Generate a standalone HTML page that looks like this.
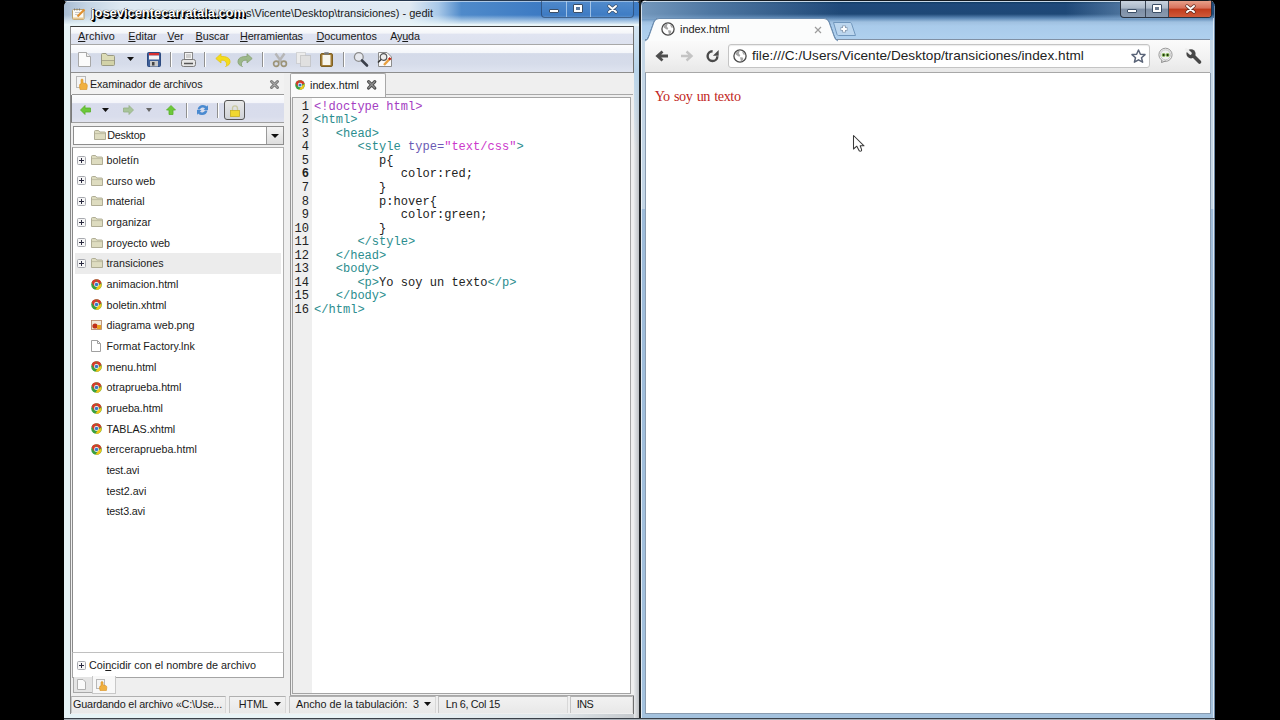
<!DOCTYPE html>
<html><head><meta charset="utf-8">
<style>
*{margin:0;padding:0;box-sizing:border-box}
html,body{width:1280px;height:720px;overflow:hidden;background:#000;font-family:"Liberation Sans",sans-serif;font-size:11px;color:#1e1e1e}
.a{position:absolute}
.t{position:absolute;white-space:pre;line-height:1}
.mono{font-family:"Liberation Mono",monospace}
u{text-decoration:underline;text-underline-offset:1px;text-decoration-thickness:1px}
svg{overflow:visible}
</style></head><body>

<div class="a" style="left:64px;top:718px;width:1151px;height:1px;background:#3a4048"></div>
<div class="a" style="left:64px;top:719px;width:1151px;height:1px;background:#a8b0b8"></div>
<div class="a" style="left:64px;top:0;width:576px;height:718px;border-radius:7px 7px 0 0;background:linear-gradient(90deg,#e6f3f6 0,#eaf3f6 50%,#dfe6ea 85%,#c4c8cc 100%);overflow:hidden"></div>
<div class="a" style="left:634px;top:18px;width:6px;height:700px;background:linear-gradient(90deg,#e8eaec,#b4b8bc)"></div>
<div class="a" style="left:634px;top:18px;width:6px;height:130px;background:linear-gradient(180deg,#dbeaf4,#b8d4ea 40%,rgba(208,221,230,0) 100%)"></div>
<div class="a" style="left:64px;top:0;width:576px;height:24px;border-radius:7px 7px 0 0;background:linear-gradient(90deg,#a8bcd2 0,#c4d4e4 4%,#dde8f1 10%,#e0eaf3 60%,#a8c8e8 65%,#4f8aca 69%,#3a78c2 85%,#3f7dc6 100%)"></div>
<div class="a" style="left:64px;top:15px;width:576px;height:11px;background:linear-gradient(180deg,rgba(236,246,250,0) 0,#e8f4f8 90%)"></div>
<div class="a" style="left:64px;top:0;width:576px;height:1px;background:#26384f;border-radius:7px 7px 0 0"></div>
<div class="a" style="left:65px;top:1px;width:574px;height:1px;background:rgba(255,255,255,.55)"></div>
<div class="t" style="left:246.00px;top:7.65px;font-size:11px;letter-spacing:-0.013px;color:#1a1a1a;">s\Vicente\Desktop\transiciones) - gedit</div>
<div class="t" style="left:200.00px;top:7.65px;font-size:11px;letter-spacing:0.000px;color:rgba(40,40,40,.35);">(C:\U</div>
<svg class="a" style="left:72px;top:8px" width="14" height="12" viewBox="0 0 14 12"><rect x="0.5" y="1.5" width="11.5" height="10" rx="1" fill="#fbfaf4" stroke="#b8a070"/><rect x="1" y="9.5" width="10.5" height="1.8" fill="#e8c890"/><path d="M3 4.5h5M3 6.5h4" stroke="#c8c8c8"/><path d="M5.5 8.5 L12.5 1.5" stroke="#e09030" stroke-width="2.2"/><path d="M2.5 0.5v2M5 0.5v2M7.5 0.5v2" stroke="#777" stroke-width="0.9"/></svg>
<div class="t" style="left:91.00px;top:6.45px;font-size:13px;letter-spacing:-0.057px;color:#fff;font-weight:bold;text-shadow:-0.6px -0.3px 0 rgba(0,0,0,.7),1px 1px 0 #000,1.8px 1.8px 0.6px #000,0 0 1px rgba(0,0,0,.6)">josevicentecarratala.com</div>
<div class="a" style="left:541px;top:1px;width:93px;height:17px;border:1px solid rgba(30,50,80,.55);border-top:none;border-radius:0 0 4px 4px;background:linear-gradient(180deg,rgba(120,170,220,.35),rgba(60,120,190,.2))"></div>
<div class="a" style="left:566px;top:1px;width:1px;height:16px;background:rgba(190,215,240,.75)"></div>
<div class="a" style="left:590px;top:1px;width:1px;height:16px;background:rgba(190,215,240,.75)"></div>
<div class="a" style="left:549px;top:9px;width:10px;height:4px;background:#fff;border:1px solid #3b4e66;border-radius:1px"></div>
<div class="a" style="left:573px;top:4px;width:10px;height:9px;background:#fff;border:1px solid #3b4e66;border-radius:1px"></div>
<div class="a" style="left:576px;top:7px;width:4px;height:3px;background:#5a7aa0"></div>
<svg class="a" style="left:607px;top:4px" width="11" height="10" viewBox="0 0 11 10"><path d="M2 2 L9 8 M9 2 L2 8" stroke="#3b4e66" stroke-width="3.4" stroke-linecap="round"/><path d="M2 2 L9 8 M9 2 L2 8" stroke="#fff" stroke-width="2" stroke-linecap="round"/></svg>
<div class="a" style="left:70px;top:26px;width:564px;height:688px;background:#efefef;border-top:1px solid #3a3a3a;border-left:1px solid #8a8a8a;border-right:1px solid #6f6f6f"></div>
<div class="a" style="left:71px;top:27px;width:562px;height:18px;background:linear-gradient(180deg,#fdfdfe 0,#f4f6f9 36%,#e0e4f1 42%,#dde2ef 100%);border-bottom:1px solid #a8a8a8"></div>
<div class="t" style="left:78.00px;top:31.12px;font-size:10.8px;letter-spacing:0.141px;color:#1a1a1a;"><u>A</u>rchivo</div>
<div class="t" style="left:128.30px;top:31.12px;font-size:10.8px;letter-spacing:0.000px;color:#1a1a1a;"><u>E</u>ditar</div>
<div class="t" style="left:167.30px;top:31.12px;font-size:10.8px;letter-spacing:0.000px;color:#1a1a1a;"><u>V</u>er</div>
<div class="t" style="left:195.50px;top:31.12px;font-size:10.8px;letter-spacing:0.000px;color:#1a1a1a;"><u>B</u>uscar</div>
<div class="t" style="left:240.00px;top:31.12px;font-size:10.8px;letter-spacing:-0.177px;color:#1a1a1a;"><u>H</u>erramientas</div>
<div class="t" style="left:316.40px;top:31.12px;font-size:10.8px;letter-spacing:-0.013px;color:#1a1a1a;"><u>D</u>ocumentos</div>
<div class="t" style="left:390.20px;top:31.12px;font-size:10.8px;letter-spacing:-0.166px;color:#1a1a1a;">Ay<u>u</u>da</div>
<div class="a" style="left:71px;top:45px;width:562px;height:28px;background:linear-gradient(180deg,#fdfdfe 0,#f4f6fa 28%,#d4dae9 32%,#d6dcea 70%,#dfe4f0 100%);border-bottom:1px solid #8e8e8e"></div>
<svg class="a" style="left:78px;top:52px" width="13" height="15" viewBox="0 0 13 15"><path d="M0.5 0.5 H8.5 L12.5 4.5 V14.5 H0.5 Z" fill="#fbfbfb" stroke="#a8a8a8"/><path d="M8.5 0.5 V4.5 H12.5" fill="#eee" stroke="#a8a8a8"/></svg>
<svg class="a" style="left:101px;top:53px" width="14" height="13" viewBox="0 0 14 13"><path d="M0.5 1.5 Q0.5 0.5 1.5 0.5 H5 L6.5 2.5 H12.5 Q13.5 2.5 13.5 3.5 V11.5 Q13.5 12.5 12.5 12.5 H1.5 Q0.5 12.5 0.5 11.5 Z" fill="#dcdcb6" stroke="#9a9a82"/><path d="M1 7.5 H13" stroke="#aaa88c"/><rect x="1" y="8" width="12" height="4" fill="#d2d2a8"/></svg>
<svg class="a" style="left:127px;top:57px" width="7" height="4" viewBox="0 0 7 4"><path d="M0 0 H7 L3.5 4 Z" fill="#111"/></svg>
<svg class="a" style="left:147px;top:52px" width="14" height="15" viewBox="0 0 14 15"><rect x="0.5" y="0.5" width="13" height="14" rx="1" fill="#3d5e98" stroke="#2c4a80"/><rect x="2" y="1" width="10" height="2.5" fill="#d83030"/><rect x="2" y="3.5" width="10" height="4" fill="#f4f4f4"/><rect x="3" y="9" width="8" height="5.5" fill="#c8c8c8"/><rect x="5" y="10" width="2.5" height="3.5" fill="#444"/></svg>
<div class="a" style="left:170px;top:52px;width:2px;height:15px;background:linear-gradient(90deg,#909090 50%,#fff 50%)"></div>
<div class="a" style="left:204px;top:52px;width:2px;height:15px;background:linear-gradient(90deg,#909090 50%,#fff 50%)"></div>
<div class="a" style="left:262px;top:52px;width:2px;height:15px;background:linear-gradient(90deg,#909090 50%,#fff 50%)"></div>
<div class="a" style="left:343px;top:52px;width:2px;height:15px;background:linear-gradient(90deg,#909090 50%,#fff 50%)"></div>
<svg class="a" style="left:181px;top:52px" width="15" height="15" viewBox="0 0 15 15"><rect x="3.5" y="0.5" width="8" height="8" fill="#f4f4f4" stroke="#8a8a8a"/><path d="M5 3h5M5 5h5" stroke="#aaa"/><rect x="0.5" y="7.5" width="14" height="7" rx="2" fill="#e6e6e6" stroke="#7a7a7a"/><path d="M3 11.5h9" stroke="#555" stroke-width="1.5"/></svg>
<svg class="a" style="left:215px;top:53px" width="16" height="14" viewBox="0 0 16 14"><path d="M6 0.8 L0.8 5.5 L6 10 V7.2 Q11 6.8 11.5 10.5 Q12 13 10.5 13.5 Q15.5 12 15 8 Q14.5 3.2 6 3.5 Z" fill="#f4dc1c" stroke="#e2c418" stroke-width="0.8"/></svg>
<svg class="a" style="left:238px;top:53px" width="15" height="14" viewBox="0 0 15 14"><path d="M9 0.8 L14.2 5.5 L9 10 V7.2 Q4 6.8 3.5 10.5 Q3 13 4.5 13.5 Q-0.5 12 0 8 Q0.5 3.2 9 3.5 Z" fill="#9cb88a" stroke="#86a072" stroke-width="0.8"/></svg>
<svg class="a" style="left:273px;top:53px" width="14" height="14" viewBox="0 0 14 14"><path d="M2.5 0.5 L8.5 9 M11.5 0.5 L5.5 9" stroke="#b6b6b6" stroke-width="2.4"/><circle cx="3.2" cy="10.8" r="2.6" fill="none" stroke="#9c9478" stroke-width="1.7"/><circle cx="10.8" cy="10.8" r="2.6" fill="none" stroke="#9c9478" stroke-width="1.7"/></svg>
<svg class="a" style="left:296px;top:52px" width="15" height="15" viewBox="0 0 15 15"><rect x="0.5" y="0.5" width="9" height="11" fill="#ececec" stroke="#bdbdbd" stroke-dasharray="1 1"/><rect x="4.5" y="3.5" width="10" height="11" fill="#e0e0e0" stroke="#b0b0b0" stroke-dasharray="1 1"/></svg>
<svg class="a" style="left:320px;top:52px" width="13" height="15" viewBox="0 0 13 15"><rect x="0.5" y="1.5" width="12" height="13" rx="1.5" fill="#a27c34" stroke="#7e6024"/><rect x="2.5" y="3" width="8" height="10" fill="#f8f6ee"/><rect x="4" y="0.3" width="5" height="2.5" rx="1" fill="#777"/></svg>
<svg class="a" style="left:353px;top:52px" width="16" height="16" viewBox="0 0 16 16"><circle cx="5.8" cy="5" r="4.4" fill="#e6e8ee" stroke="#8c8c8c" stroke-width="1.3"/><path d="M9 8.5 L14 13.5" stroke="#3a3f4a" stroke-width="2.6" stroke-linecap="round"/></svg>
<svg class="a" style="left:377px;top:52px" width="15" height="15" viewBox="0 0 15 15"><path d="M1.5 0.5 H10 L14.5 5 V14.5 H1.5 Z" fill="#fafafa" stroke="#8c8c8c"/><circle cx="6.5" cy="5" r="3.3" fill="#eee" stroke="#555" stroke-width="1.2"/><path d="M4 7.5 L1 10.5" stroke="#333" stroke-width="1.6"/><path d="M13.5 6 L7 13" stroke="#e8a040" stroke-width="2.4"/><path d="M13.5 6 L12 7.6" stroke="#c02020" stroke-width="2.4"/></svg>
<div class="a" style="left:71px;top:73px;width:218px;height:622px;background:#efefef"></div>
<div class="a" style="left:72px;top:73px;width:212px;height:22px;background:#f2f2f2;border-bottom:1px solid #9a9a9a"></div>
<svg class="a" style="left:76px;top:76px" width="12" height="14" viewBox="0 0 12 14"><rect x="0.5" y="0.5" width="9" height="11" fill="#f4f4f4" stroke="#b8b8b8"/><path d="M4 13.5 Q3 9 4 8 L5 8 V3.5 Q6 2.5 7 3.5 V7 L10 7.5 Q11.5 8 11.3 10 L10.8 13.5 Z" fill="#f0b040" stroke="#d89020" stroke-width="0.6"/></svg>
<div class="t" style="left:90.00px;top:78.82px;font-size:10.8px;letter-spacing:-0.153px;color:#1a1a1a;">Examinador de archivos</div>
<svg class="a" style="left:270px;top:80px" width="9" height="9" viewBox="0 0 9 9"><path d="M1.5 1.5 L7.5 7.5 M7.5 1.5 L1.5 7.5" stroke="#777" stroke-width="3" stroke-linecap="round"/><path d="M1.7 1.7 L7.3 7.3 M7.3 1.7 L1.7 7.3" stroke="#a8a8a8" stroke-width="1.2" stroke-linecap="round"/></svg>
<div class="a" style="left:71px;top:95px;width:213px;height:28px;background:linear-gradient(180deg,#fbfcfd 0,#f4f5fa 28%,#d8dcec 32%,#d9ddec 80%,#e0e3ef 100%);border-left:1px solid #7a7a7a;border-bottom:1px solid #a0a0a0"></div>
<svg class="a" style="left:80px;top:105px" width="11" height="10" viewBox="0 0 11 10"><path d="M0.5 5 L5 0.5 V3 H10.5 V7 H5 V9.5 Z" fill="#6cc83a" stroke="#58b028" stroke-width="0.8"/></svg>
<svg class="a" style="left:102px;top:108px" width="7" height="4" viewBox="0 0 7 4"><path d="M0 0 H7 L3.5 4 Z" fill="#111"/></svg>
<svg class="a" style="left:123px;top:105px" width="11" height="10" viewBox="0 0 11 10"><path d="M10.5 5 L6 0.5 V3 H0.5 V7 H6 V9.5 Z" fill="#a8c49a" stroke="#94b086" stroke-width="0.8"/></svg>
<svg class="a" style="left:146px;top:108px" width="6" height="4" viewBox="0 0 6 4"><path d="M0 0 H6 L3 4 Z" fill="#666"/></svg>
<svg class="a" style="left:166px;top:105px" width="10" height="10" viewBox="0 0 10 10"><path d="M5 0.5 L9.5 5 H7 V9.5 H3 V5 H0.5 Z" fill="#6cc83a" stroke="#58b028" stroke-width="0.8"/></svg>
<div class="a" style="left:186px;top:103px;width:2px;height:15px;background:linear-gradient(90deg,#909090 50%,#fff 50%)"></div>
<div class="a" style="left:217px;top:103px;width:2px;height:15px;background:linear-gradient(90deg,#909090 50%,#fff 50%)"></div>
<svg class="a" style="left:196px;top:104px" width="13" height="12" viewBox="0 0 13 12"><path d="M1.5 5.5 Q2.5 1 7 1 Q9.5 1 11 2.5 L12 1 V6 H7.5 L9 4.5 Q8 3.5 6.5 3.6 Q4.5 3.8 4 5.5 Z" fill="#4a8ad0"/><path d="M11.5 6.5 Q10.5 11 6 11 Q3.5 11 2 9.5 L1 11 V6 H5.5 L4 7.5 Q5 8.5 6.5 8.4 Q8.5 8.2 9 6.5 Z" fill="#4a8ad0"/></svg>
<div class="a" style="left:224px;top:100px;width:21px;height:20px;border:1px solid #555;border-radius:3px;background:linear-gradient(180deg,#e8e8e8,#cfd2d8)"></div>
<svg class="a" style="left:230px;top:105px" width="10" height="12" viewBox="0 0 10 12"><path d="M2.5 6 V3.5 Q2.5 0.8 5 0.8 Q7.5 0.8 7.5 3.5 V6" fill="none" stroke="#c8c8a0" stroke-width="1.3"/><rect x="0.5" y="5.5" width="9" height="6" fill="#f0d830" stroke="#c8b020" stroke-width="0.8"/></svg>
<div class="a" style="left:73px;top:126px;width:211px;height:19px;background:#fff;border:1px solid #8e8e8e"></div>
<div class="a" style="left:266px;top:127px;width:17px;height:17px;background:linear-gradient(180deg,#f4f4f4,#dedede);border-left:1px solid #9a9a9a"></div>
<svg class="a" style="left:271px;top:134px" width="8" height="4" viewBox="0 0 8 4"><path d="M0 0 H8 L4 4 Z" fill="#111"/></svg>
<svg class="a" style="left:94px;top:130px" width="12" height="10" viewBox="0 0 12 10"><path d="M0.5 1.5 Q0.5 0.5 1.5 0.5 H4.5 L5.8 2 H10.5 Q11.5 2 11.5 3 V9.5 H0.5 Z" fill="#dedcc0" stroke="#a8a68c" stroke-width="0.9"/><path d="M0.8 3.6 H11.2" stroke="#b8b69c" stroke-width="0.8"/></svg>
<div class="t" style="left:107.20px;top:129.57px;font-size:10.8px;letter-spacing:-0.231px;color:#1a1a1a;">Desktop</div>
<div class="a" style="left:72px;top:147px;width:212px;height:506px;background:#fff;border:1px solid #b0b0b0;border-left:1px solid #8a8a8a"></div>
<svg class="a" style="left:77px;top:156px" width="9" height="9" viewBox="0 0 9 9"><rect x="0.5" y="0.5" width="8" height="8" rx="1" fill="#f6f6f6" stroke="#a8aab0"/><path d="M2 4.5 H7 M4.5 2 V7" stroke="#2a2a40" stroke-width="1"/></svg>
<svg class="a" style="left:91px;top:155px" width="12" height="10" viewBox="0 0 12 10"><path d="M0.5 1.5 Q0.5 0.5 1.5 0.5 H4.5 L5.8 2 H10.5 Q11.5 2 11.5 3 V9.5 H0.5 Z" fill="#dedcc0" stroke="#a8a68c" stroke-width="0.9"/><path d="M0.8 3.6 H11.2" stroke="#b8b69c" stroke-width="0.8"/></svg>
<div class="t" style="left:106.50px;top:154.91px;font-size:10.7px;letter-spacing:0.053px;color:#1a1a1a;">boletín</div>
<svg class="a" style="left:77px;top:176px" width="9" height="9" viewBox="0 0 9 9"><rect x="0.5" y="0.5" width="8" height="8" rx="1" fill="#f6f6f6" stroke="#a8aab0"/><path d="M2 4.5 H7 M4.5 2 V7" stroke="#2a2a40" stroke-width="1"/></svg>
<svg class="a" style="left:91px;top:176px" width="12" height="10" viewBox="0 0 12 10"><path d="M0.5 1.5 Q0.5 0.5 1.5 0.5 H4.5 L5.8 2 H10.5 Q11.5 2 11.5 3 V9.5 H0.5 Z" fill="#dedcc0" stroke="#a8a68c" stroke-width="0.9"/><path d="M0.8 3.6 H11.2" stroke="#b8b69c" stroke-width="0.8"/></svg>
<div class="t" style="left:106.50px;top:175.59px;font-size:10.7px;letter-spacing:0.000px;color:#1a1a1a;">curso web</div>
<svg class="a" style="left:77px;top:197px" width="9" height="9" viewBox="0 0 9 9"><rect x="0.5" y="0.5" width="8" height="8" rx="1" fill="#f6f6f6" stroke="#a8aab0"/><path d="M2 4.5 H7 M4.5 2 V7" stroke="#2a2a40" stroke-width="1"/></svg>
<svg class="a" style="left:91px;top:196px" width="12" height="10" viewBox="0 0 12 10"><path d="M0.5 1.5 Q0.5 0.5 1.5 0.5 H4.5 L5.8 2 H10.5 Q11.5 2 11.5 3 V9.5 H0.5 Z" fill="#dedcc0" stroke="#a8a68c" stroke-width="0.9"/><path d="M0.8 3.6 H11.2" stroke="#b8b69c" stroke-width="0.8"/></svg>
<div class="t" style="left:106.50px;top:196.26px;font-size:10.7px;letter-spacing:0.000px;color:#1a1a1a;">material</div>
<svg class="a" style="left:77px;top:218px" width="9" height="9" viewBox="0 0 9 9"><rect x="0.5" y="0.5" width="8" height="8" rx="1" fill="#f6f6f6" stroke="#a8aab0"/><path d="M2 4.5 H7 M4.5 2 V7" stroke="#2a2a40" stroke-width="1"/></svg>
<svg class="a" style="left:91px;top:217px" width="12" height="10" viewBox="0 0 12 10"><path d="M0.5 1.5 Q0.5 0.5 1.5 0.5 H4.5 L5.8 2 H10.5 Q11.5 2 11.5 3 V9.5 H0.5 Z" fill="#dedcc0" stroke="#a8a68c" stroke-width="0.9"/><path d="M0.8 3.6 H11.2" stroke="#b8b69c" stroke-width="0.8"/></svg>
<div class="t" style="left:106.50px;top:216.94px;font-size:10.7px;letter-spacing:0.000px;color:#1a1a1a;">organizar</div>
<svg class="a" style="left:77px;top:238px" width="9" height="9" viewBox="0 0 9 9"><rect x="0.5" y="0.5" width="8" height="8" rx="1" fill="#f6f6f6" stroke="#a8aab0"/><path d="M2 4.5 H7 M4.5 2 V7" stroke="#2a2a40" stroke-width="1"/></svg>
<svg class="a" style="left:91px;top:238px" width="12" height="10" viewBox="0 0 12 10"><path d="M0.5 1.5 Q0.5 0.5 1.5 0.5 H4.5 L5.8 2 H10.5 Q11.5 2 11.5 3 V9.5 H0.5 Z" fill="#dedcc0" stroke="#a8a68c" stroke-width="0.9"/><path d="M0.8 3.6 H11.2" stroke="#b8b69c" stroke-width="0.8"/></svg>
<div class="t" style="left:106.50px;top:237.62px;font-size:10.7px;letter-spacing:0.000px;color:#1a1a1a;">proyecto web</div>
<div class="a" style="left:75px;top:253.0px;width:206px;height:20.7px;background:#ececec"></div>
<svg class="a" style="left:77px;top:259px" width="9" height="9" viewBox="0 0 9 9"><rect x="0.5" y="0.5" width="8" height="8" rx="1" fill="#f6f6f6" stroke="#a8aab0"/><path d="M2 4.5 H7 M4.5 2 V7" stroke="#2a2a40" stroke-width="1"/></svg>
<svg class="a" style="left:91px;top:258px" width="12" height="10" viewBox="0 0 12 10"><path d="M0.5 1.5 Q0.5 0.5 1.5 0.5 H4.5 L5.8 2 H10.5 Q11.5 2 11.5 3 V9.5 H0.5 Z" fill="#dedcc0" stroke="#a8a68c" stroke-width="0.9"/><path d="M0.8 3.6 H11.2" stroke="#b8b69c" stroke-width="0.8"/></svg>
<div class="t" style="left:106.50px;top:258.30px;font-size:10.7px;letter-spacing:0.000px;color:#1a1a1a;">transiciones</div>
<svg class="a" style="left:91px;top:279px" width="11" height="11" viewBox="0 0 10 10"><circle cx="5" cy="5" r="4.8" fill="#3aa040"/><path d="M5 0.2 A4.8 4.8 0 0 1 9.6 4 L5 4 Z" fill="#d83a2a"/><path d="M5 0.2 A4.8 4.8 0 0 0 0.6 3.2 L2.8 6.6 Z" fill="#d83a2a"/><path d="M9.6 4 A4.8 4.8 0 0 1 4 9.7 L6.6 6 Z" fill="#f2c418"/><circle cx="5" cy="5" r="2.2" fill="#fff"/><circle cx="5" cy="5" r="1.6" fill="#3a78c8"/></svg>
<div class="t" style="left:106.50px;top:278.99px;font-size:10.7px;letter-spacing:0.000px;color:#1a1a1a;">animacion.html</div>
<svg class="a" style="left:91px;top:299px" width="11" height="11" viewBox="0 0 10 10"><circle cx="5" cy="5" r="4.8" fill="#3aa040"/><path d="M5 0.2 A4.8 4.8 0 0 1 9.6 4 L5 4 Z" fill="#d83a2a"/><path d="M5 0.2 A4.8 4.8 0 0 0 0.6 3.2 L2.8 6.6 Z" fill="#d83a2a"/><path d="M9.6 4 A4.8 4.8 0 0 1 4 9.7 L6.6 6 Z" fill="#f2c418"/><circle cx="5" cy="5" r="2.2" fill="#fff"/><circle cx="5" cy="5" r="1.6" fill="#3a78c8"/></svg>
<div class="t" style="left:106.50px;top:299.66px;font-size:10.7px;letter-spacing:0.000px;color:#1a1a1a;">boletin.xhtml</div>
<svg class="a" style="left:91px;top:320px" width="11" height="10" viewBox="0 0 11 10"><rect x="0.5" y="0.5" width="10" height="9" fill="#f2e8d8" stroke="#b08060" stroke-width="0.8"/><circle cx="4" cy="6" r="2.6" fill="#c03018"/><rect x="6" y="5" width="4" height="4" fill="#e8a020"/></svg>
<div class="t" style="left:106.50px;top:320.34px;font-size:10.7px;letter-spacing:0.000px;color:#1a1a1a;">diagrama web.png</div>
<svg class="a" style="left:91px;top:340px" width="10" height="12" viewBox="0 0 10 12"><path d="M0.5 0.5 H6.5 L9.5 3.5 V11.5 H0.5 Z" fill="#fff" stroke="#a0a0a0"/><path d="M6.5 0.5 V3.5 H9.5" fill="none" stroke="#a0a0a0"/></svg>
<div class="t" style="left:106.50px;top:341.02px;font-size:10.7px;letter-spacing:0.000px;color:#1a1a1a;">Format Factory.lnk</div>
<svg class="a" style="left:91px;top:361px" width="11" height="11" viewBox="0 0 10 10"><circle cx="5" cy="5" r="4.8" fill="#3aa040"/><path d="M5 0.2 A4.8 4.8 0 0 1 9.6 4 L5 4 Z" fill="#d83a2a"/><path d="M5 0.2 A4.8 4.8 0 0 0 0.6 3.2 L2.8 6.6 Z" fill="#d83a2a"/><path d="M9.6 4 A4.8 4.8 0 0 1 4 9.7 L6.6 6 Z" fill="#f2c418"/><circle cx="5" cy="5" r="2.2" fill="#fff"/><circle cx="5" cy="5" r="1.6" fill="#3a78c8"/></svg>
<div class="t" style="left:106.50px;top:361.70px;font-size:10.7px;letter-spacing:0.000px;color:#1a1a1a;">menu.html</div>
<svg class="a" style="left:91px;top:382px" width="11" height="11" viewBox="0 0 10 10"><circle cx="5" cy="5" r="4.8" fill="#3aa040"/><path d="M5 0.2 A4.8 4.8 0 0 1 9.6 4 L5 4 Z" fill="#d83a2a"/><path d="M5 0.2 A4.8 4.8 0 0 0 0.6 3.2 L2.8 6.6 Z" fill="#d83a2a"/><path d="M9.6 4 A4.8 4.8 0 0 1 4 9.7 L6.6 6 Z" fill="#f2c418"/><circle cx="5" cy="5" r="2.2" fill="#fff"/><circle cx="5" cy="5" r="1.6" fill="#3a78c8"/></svg>
<div class="t" style="left:106.50px;top:382.38px;font-size:10.7px;letter-spacing:0.000px;color:#1a1a1a;">otraprueba.html</div>
<svg class="a" style="left:91px;top:403px" width="11" height="11" viewBox="0 0 10 10"><circle cx="5" cy="5" r="4.8" fill="#3aa040"/><path d="M5 0.2 A4.8 4.8 0 0 1 9.6 4 L5 4 Z" fill="#d83a2a"/><path d="M5 0.2 A4.8 4.8 0 0 0 0.6 3.2 L2.8 6.6 Z" fill="#d83a2a"/><path d="M9.6 4 A4.8 4.8 0 0 1 4 9.7 L6.6 6 Z" fill="#f2c418"/><circle cx="5" cy="5" r="2.2" fill="#fff"/><circle cx="5" cy="5" r="1.6" fill="#3a78c8"/></svg>
<div class="t" style="left:106.50px;top:403.06px;font-size:10.7px;letter-spacing:0.000px;color:#1a1a1a;">prueba.html</div>
<svg class="a" style="left:91px;top:423px" width="11" height="11" viewBox="0 0 10 10"><circle cx="5" cy="5" r="4.8" fill="#3aa040"/><path d="M5 0.2 A4.8 4.8 0 0 1 9.6 4 L5 4 Z" fill="#d83a2a"/><path d="M5 0.2 A4.8 4.8 0 0 0 0.6 3.2 L2.8 6.6 Z" fill="#d83a2a"/><path d="M9.6 4 A4.8 4.8 0 0 1 4 9.7 L6.6 6 Z" fill="#f2c418"/><circle cx="5" cy="5" r="2.2" fill="#fff"/><circle cx="5" cy="5" r="1.6" fill="#3a78c8"/></svg>
<div class="t" style="left:106.50px;top:423.74px;font-size:10.7px;letter-spacing:0.000px;color:#1a1a1a;">TABLAS.xhtml</div>
<svg class="a" style="left:91px;top:444px" width="11" height="11" viewBox="0 0 10 10"><circle cx="5" cy="5" r="4.8" fill="#3aa040"/><path d="M5 0.2 A4.8 4.8 0 0 1 9.6 4 L5 4 Z" fill="#d83a2a"/><path d="M5 0.2 A4.8 4.8 0 0 0 0.6 3.2 L2.8 6.6 Z" fill="#d83a2a"/><path d="M9.6 4 A4.8 4.8 0 0 1 4 9.7 L6.6 6 Z" fill="#f2c418"/><circle cx="5" cy="5" r="2.2" fill="#fff"/><circle cx="5" cy="5" r="1.6" fill="#3a78c8"/></svg>
<div class="t" style="left:106.50px;top:444.42px;font-size:10.7px;letter-spacing:0.033px;color:#1a1a1a;">terceraprueba.html</div>
<div class="t" style="left:106.50px;top:465.10px;font-size:10.7px;letter-spacing:-0.150px;color:#1a1a1a;">test.avi</div>
<div class="t" style="left:106.50px;top:485.78px;font-size:10.7px;letter-spacing:0.000px;color:#1a1a1a;">test2.avi</div>
<div class="t" style="left:106.50px;top:506.46px;font-size:10.7px;letter-spacing:-0.150px;color:#1a1a1a;">test3.avi</div>
<div class="a" style="left:72px;top:652px;width:212px;height:26px;background:#fff;border:1px solid #a4a4a4;border-top:1px solid #c0c0c0"></div>
<svg class="a" style="left:77px;top:661px" width="9" height="9" viewBox="0 0 9 9"><rect x="0.5" y="0.5" width="8" height="8" rx="1" fill="#f6f6f6" stroke="#a8aab0"/><path d="M2 4.5 H7 M4.5 2 V7" stroke="#2a2a40" stroke-width="1"/></svg>
<div class="t" style="left:89.00px;top:659.57px;font-size:10.8px;letter-spacing:0.021px;color:#1a1a1a;">Coi<u>n</u>cidir con el nombre de archivo</div>
<div class="a" style="left:73px;top:677px;width:20px;height:16px;background:#e4e4e4;border:1px solid #a8a8a8;border-top:none"></div>
<svg class="a" style="left:77px;top:679px" width="9" height="11" viewBox="0 0 9 11"><path d="M0.5 0.5 H6 L8.5 3 V10.5 H0.5 Z" fill="#fafafa" stroke="#b0b0b0"/></svg>
<div class="a" style="left:92px;top:676px;width:24px;height:18px;background:#f8f8f8;border:1px solid #c8c8c8;border-top:none"></div>
<svg class="a" style="left:96px;top:679px" width="12" height="12" viewBox="0 0 12 12"><rect x="0.5" y="0.5" width="8" height="9" fill="#f4f4f4" stroke="#b8b8b8"/><path d="M4 11.5 Q3 8 4 7 L5 7 V3 Q6 2 7 3 V6 L9.5 6.5 Q11 7 10.8 8.5 L10.4 11.5 Z" fill="#f0b040" stroke="#d89020" stroke-width="0.6"/></svg>
<div class="a" style="left:289px;top:73px;width:345px;height:622px;background:#efefef"></div>
<div class="a" style="left:290px;top:73px;width:96px;height:25px;background:#fbfbfb;border:1px solid #a8a8a8;border-bottom:none;border-radius:2px 2px 0 0"></div>
<svg class="a" style="left:295px;top:80px" width="10" height="10" viewBox="0 0 10 10"><circle cx="5" cy="5" r="4.8" fill="#3aa040"/><path d="M5 0.2 A4.8 4.8 0 0 1 9.6 4 L5 4 Z" fill="#d83a2a"/><path d="M5 0.2 A4.8 4.8 0 0 0 0.6 3.2 L2.8 6.6 Z" fill="#d83a2a"/><path d="M9.6 4 A4.8 4.8 0 0 1 4 9.7 L6.6 6 Z" fill="#f2c418"/><circle cx="5" cy="5" r="2.2" fill="#fff"/><circle cx="5" cy="5" r="1.6" fill="#3a78c8"/></svg>
<div class="t" style="left:310.00px;top:79.57px;font-size:10.8px;letter-spacing:-0.022px;color:#1a1a1a;">index.html</div>
<svg class="a" style="left:367px;top:80px" width="10" height="10" viewBox="0 0 10 10"><path d="M1.6 1.6 L7.8 8 M7.8 1.6 L1.6 8" stroke="#4a4a4a" stroke-width="3.2" stroke-linecap="round"/><path d="M1.8 1.8 L7.6 7.8 M7.6 1.8 L1.8 7.8" stroke="#8e8e8e" stroke-width="1.4" stroke-linecap="round"/></svg>
<div class="a" style="left:386px;top:94px;width:247px;height:1px;background:#a8a8a8"></div>
<div class="a" style="left:290px;top:97px;width:1px;height:599px;background:#959595"></div>
<div class="a" style="left:290px;top:695px;width:344px;height:1px;background:#a8a8a8"></div>
<div class="a" style="left:292px;top:97px;width:339px;height:597px;background:#fff;border:1px solid #a4a4a4"></div>
<div class="a" style="left:293px;top:98px;width:19px;height:595px;background:#efefef"></div>
<div class="t mono" style="left:301.77px;top:99.83px;font-size:12.05px;color:#222;font-weight:normal;transform:scaleY(1.1);transform-origin:0 0">1</div>
<div class="t mono" style="left:314px;top:99.83px;font-size:12.05px;transform:scaleY(1.1);transform-origin:0 0"><span style="color:#a43cc2">&lt;!doctype html&gt;</span></div>
<div class="t mono" style="left:301.77px;top:113.36px;font-size:12.05px;color:#222;font-weight:normal;transform:scaleY(1.1);transform-origin:0 0">2</div>
<div class="t mono" style="left:314px;top:113.36px;font-size:12.05px;transform:scaleY(1.1);transform-origin:0 0"><span style="color:#2b8d8e">&lt;html&gt;</span></div>
<div class="t mono" style="left:301.77px;top:126.89px;font-size:12.05px;color:#222;font-weight:normal;transform:scaleY(1.1);transform-origin:0 0">3</div>
<div class="t mono" style="left:314px;top:126.89px;font-size:12.05px;transform:scaleY(1.1);transform-origin:0 0"><span style="color:#222">   </span><span style="color:#2b8d8e">&lt;head&gt;</span></div>
<div class="t mono" style="left:301.77px;top:140.42px;font-size:12.05px;color:#222;font-weight:normal;transform:scaleY(1.1);transform-origin:0 0">4</div>
<div class="t mono" style="left:314px;top:140.42px;font-size:12.05px;transform:scaleY(1.1);transform-origin:0 0"><span style="color:#222">      </span><span style="color:#2b8d8e">&lt;style </span><span style="color:#6a5ab4">type=</span><span style="color:#cc38cc">"text/css"</span><span style="color:#2b8d8e">&gt;</span></div>
<div class="t mono" style="left:301.77px;top:153.95px;font-size:12.05px;color:#222;font-weight:normal;transform:scaleY(1.1);transform-origin:0 0">5</div>
<div class="t mono" style="left:314px;top:153.95px;font-size:12.05px;transform:scaleY(1.1);transform-origin:0 0"><span style="color:#222">         p{</span></div>
<div class="t mono" style="left:301.77px;top:167.48px;font-size:12.05px;color:#222;font-weight:bold;transform:scaleY(1.1);transform-origin:0 0">6</div>
<div class="t mono" style="left:314px;top:167.48px;font-size:12.05px;transform:scaleY(1.1);transform-origin:0 0"><span style="color:#222">            color:red;</span></div>
<div class="t mono" style="left:301.77px;top:181.01px;font-size:12.05px;color:#222;font-weight:normal;transform:scaleY(1.1);transform-origin:0 0">7</div>
<div class="t mono" style="left:314px;top:181.01px;font-size:12.05px;transform:scaleY(1.1);transform-origin:0 0"><span style="color:#222">         }</span></div>
<div class="t mono" style="left:301.77px;top:194.54px;font-size:12.05px;color:#222;font-weight:normal;transform:scaleY(1.1);transform-origin:0 0">8</div>
<div class="t mono" style="left:314px;top:194.54px;font-size:12.05px;transform:scaleY(1.1);transform-origin:0 0"><span style="color:#222">         p:hover{</span></div>
<div class="t mono" style="left:301.77px;top:208.07px;font-size:12.05px;color:#222;font-weight:normal;transform:scaleY(1.1);transform-origin:0 0">9</div>
<div class="t mono" style="left:314px;top:208.07px;font-size:12.05px;transform:scaleY(1.1);transform-origin:0 0"><span style="color:#222">            color:green;</span></div>
<div class="t mono" style="left:294.54px;top:221.60px;font-size:12.05px;color:#222;font-weight:normal;transform:scaleY(1.1);transform-origin:0 0">10</div>
<div class="t mono" style="left:314px;top:221.60px;font-size:12.05px;transform:scaleY(1.1);transform-origin:0 0"><span style="color:#222">         }</span></div>
<div class="t mono" style="left:294.54px;top:235.13px;font-size:12.05px;color:#222;font-weight:normal;transform:scaleY(1.1);transform-origin:0 0">11</div>
<div class="t mono" style="left:314px;top:235.13px;font-size:12.05px;transform:scaleY(1.1);transform-origin:0 0"><span style="color:#222">      </span><span style="color:#2b8d8e">&lt;/style&gt;</span></div>
<div class="t mono" style="left:294.54px;top:248.66px;font-size:12.05px;color:#222;font-weight:normal;transform:scaleY(1.1);transform-origin:0 0">12</div>
<div class="t mono" style="left:314px;top:248.66px;font-size:12.05px;transform:scaleY(1.1);transform-origin:0 0"><span style="color:#222">   </span><span style="color:#2b8d8e">&lt;/head&gt;</span></div>
<div class="t mono" style="left:294.54px;top:262.19px;font-size:12.05px;color:#222;font-weight:normal;transform:scaleY(1.1);transform-origin:0 0">13</div>
<div class="t mono" style="left:314px;top:262.19px;font-size:12.05px;transform:scaleY(1.1);transform-origin:0 0"><span style="color:#222">   </span><span style="color:#2b8d8e">&lt;body&gt;</span></div>
<div class="t mono" style="left:294.54px;top:275.72px;font-size:12.05px;color:#222;font-weight:normal;transform:scaleY(1.1);transform-origin:0 0">14</div>
<div class="t mono" style="left:314px;top:275.72px;font-size:12.05px;transform:scaleY(1.1);transform-origin:0 0"><span style="color:#222">      </span><span style="color:#2b8d8e">&lt;p&gt;</span><span style="color:#222">Yo soy un texto</span><span style="color:#2b8d8e">&lt;/p&gt;</span></div>
<div class="t mono" style="left:294.54px;top:289.25px;font-size:12.05px;color:#222;font-weight:normal;transform:scaleY(1.1);transform-origin:0 0">15</div>
<div class="t mono" style="left:314px;top:289.25px;font-size:12.05px;transform:scaleY(1.1);transform-origin:0 0"><span style="color:#222">   </span><span style="color:#2b8d8e">&lt;/body&gt;</span></div>
<div class="t mono" style="left:294.54px;top:302.78px;font-size:12.05px;color:#222;font-weight:normal;transform:scaleY(1.1);transform-origin:0 0">16</div>
<div class="t mono" style="left:314px;top:302.78px;font-size:12.05px;transform:scaleY(1.1);transform-origin:0 0"><span style="color:#2b8d8e">&lt;/html&gt;</span></div>
<div class="a" style="left:71px;top:696px;width:155px;height:17.4px;background:linear-gradient(180deg,#f2f2f2,#e8e8e8);border-top:1px solid #b0b0b0;border-left:1px solid #c4c4c4;border-right:1px solid #d8d8d8"></div>
<div class="t" style="left:73.00px;top:698.92px;font-size:10.8px;letter-spacing:-0.170px;color:#1a1a1a;">Guardando el archivo «C:\Use...</div>
<div class="a" style="left:229px;top:696px;width:57px;height:17.4px;background:linear-gradient(180deg,#f2f2f2,#e8e8e8);border-top:1px solid #b0b0b0;border-left:1px solid #c4c4c4;border-right:1px solid #d8d8d8"></div>
<div class="t" style="left:238.75px;top:698.92px;font-size:10.8px;letter-spacing:-0.100px;color:#1a1a1a;">HTML</div>
<div class="a" style="left:289px;top:696px;width:147px;height:17.4px;background:linear-gradient(180deg,#f2f2f2,#e8e8e8);border-top:1px solid #b0b0b0;border-left:1px solid #c4c4c4;border-right:1px solid #d8d8d8"></div>
<div class="t" style="left:296.00px;top:698.92px;font-size:10.8px;letter-spacing:-0.034px;color:#1a1a1a;">Ancho de la tabulación:</div>
<div class="a" style="left:438px;top:696px;width:130px;height:17.4px;background:linear-gradient(180deg,#f2f2f2,#e8e8e8);border-top:1px solid #b0b0b0;border-left:1px solid #c4c4c4;border-right:1px solid #d8d8d8"></div>
<div class="t" style="left:445.75px;top:698.92px;font-size:10.8px;letter-spacing:-0.333px;color:#1a1a1a;">Ln 6, Col 15</div>
<div class="a" style="left:570px;top:696px;width:63px;height:17.4px;background:linear-gradient(180deg,#f2f2f2,#e8e8e8);border-top:1px solid #b0b0b0;border-left:1px solid #c4c4c4;border-right:1px solid #d8d8d8"></div>
<div class="t" style="left:576.75px;top:698.92px;font-size:10.8px;letter-spacing:-0.585px;color:#1a1a1a;">INS</div>
<div class="t" style="left:413.00px;top:698.92px;font-size:10.8px;letter-spacing:0.000px;color:#1a1a1a;">3</div>
<svg class="a" style="left:274px;top:702px" width="7" height="4" viewBox="0 0 7 4"><path d="M0 0 H7 L3.5 4 Z" fill="#111"/></svg>
<svg class="a" style="left:424px;top:702px" width="7" height="4" viewBox="0 0 7 4"><path d="M0 0 H7 L3.5 4 Z" fill="#111"/></svg>
<div class="a" style="left:640px;top:0;width:575px;height:718px;border-radius:7px 7px 0 0;background:linear-gradient(180deg,#c4d6e6 0,#c4d6e6 209px,#9ebcda 209px,#a4c2de 100%);overflow:hidden"></div>
<div class="a" style="left:640px;top:0;width:575px;height:40px;border-radius:7px 7px 0 0;background:linear-gradient(180deg,#151a20 0,#151a20 1px,#c8d8e8 1px,#c8d8e8 2px,#0e3a60 2px,#20497a 4px,#1e4876 14px,#5a86b4 18px,#9fc0e0 22px,#a9cbeb 26px,#afd0ee 39px)"></div>
<div class="a" style="left:641px;top:2px;width:574px;height:17px;border-radius:6px 6px 0 0;background:linear-gradient(90deg,rgba(130,165,200,.85) 0,rgba(110,150,190,.6) 12%,rgba(60,100,150,0) 35%,rgba(60,100,150,0) 74%,rgba(140,175,210,.55) 87%,rgba(60,100,150,0) 100%)"></div>
<div class="a" style="left:641px;top:1px;width:5px;height:717px;border-radius:6px 0 0 0;border-left:1px solid rgba(255,255,255,.7);border-top:1px solid rgba(255,255,255,.7)"></div>
<div class="a" style="left:639px;top:0;width:2px;height:718px;background:#1f2326"></div>
<div class="a" style="left:1120px;top:1px;width:92px;height:17px;border:1px solid #2a3340;border-top:none;border-radius:0 0 4px 4px;overflow:hidden;background:linear-gradient(180deg,#c9d3df 0,#aab8c8 45%,#7d8ea5 50%,#8a9ab0 100%)"></div>
<div class="a" style="left:1169px;top:1px;width:42px;height:16px;border-radius:0 0 3px 0;background:linear-gradient(180deg,#e8a08a 0,#d8705a 45%,#c03a1c 50%,#d05a3a 100%)"></div>
<div class="a" style="left:1145px;top:1px;width:1px;height:16px;background:#3a4656"></div>
<div class="a" style="left:1168px;top:1px;width:1px;height:16px;background:#3a4656"></div>
<div class="a" style="left:1127px;top:9px;width:10px;height:4px;background:#fff;border:1px solid #3b4e66;border-radius:1px"></div>
<div class="a" style="left:1152px;top:4px;width:10px;height:9px;background:#fff;border:1px solid #3b4e66;border-radius:1px"></div>
<div class="a" style="left:1155px;top:7px;width:4px;height:3px;background:#6a7a90"></div>
<svg class="a" style="left:1185px;top:4px" width="11" height="10" viewBox="0 0 11 10"><path d="M2 2 L9 8 M9 2 L2 8" stroke="#5a2a20" stroke-width="3.4" stroke-linecap="round"/><path d="M2 2 L9 8 M9 2 L2 8" stroke="#fff" stroke-width="2" stroke-linecap="round"/></svg>
<svg class="a" style="left:832px;top:22px" width="25" height="15" viewBox="0 0 25 15"><path d="M1.5 0.5 H18 Q19 0.5 19.5 1.5 L23.5 13.5 H6.5 Q5.5 13.5 5 12.5 Z" fill="#bcd6ee" stroke="#7197bd"/><path d="M12 3.5 V10.5 M8.5 7 H15.5" stroke="#8a9cb0" stroke-width="3.6"/><path d="M12 4.2 V9.8 M9.2 7 H14.8" stroke="#fff" stroke-width="2"/></svg>
<div class="a" style="left:645px;top:39px;width:565px;height:1px;background:#8090a4"></div>
<svg class="a" style="left:644px;top:18px" width="195" height="23" viewBox="0 0 195 23"><path d="M1 23 Q4 22 5 18 L10 4 Q11.5 0.5 15 0.5 H180 Q183.5 0.5 185 4 L190 18 Q191 22 194 23 Z" fill="#fbfcfc" stroke="#56789c" stroke-width="1.2"/></svg>
<div class="a" style="left:645px;top:40px;width:565px;height:33px;background:linear-gradient(180deg,#fbfbfb 0,#f3f3f3 50%,#e8e8e8 100%);border-bottom:1px solid #a8a8a8"></div>
<svg class="a" style="left:644px;top:18px" width="195" height="23" viewBox="0 0 195 23"><path d="M1 23 Q4 22 5 18 L10 4 Q11.5 0.5 15 0.5 H180 Q183.5 0.5 185 4 L190 18 Q191 22 194 23" fill="#fbfcfc" stroke="#6a8cb0"/></svg>
<svg class="a" style="left:661px;top:22px" width="14" height="14" viewBox="0 0 14 14"><circle cx="7" cy="7" r="6.1" fill="#fff" stroke="#4a4a4a" stroke-width="1.3"/><path d="M2.2 4.5 Q4 1.6 7 1.6 L6.2 3.2 Q5.2 4.4 6.6 5.4 Q7.8 6.2 6.8 7.4 Q5.2 7.8 4.2 6.6 Q2.8 6 2.2 4.5 Z M6.8 8.4 Q8.8 7.8 10.2 8.8 Q10.6 10.6 9 12.2 Q7.8 12.6 7.6 11 Q7.6 9.8 6.8 8.4 Z M8.8 2.2 Q11 2.8 12.2 5 Q11.6 6.2 10.4 5.6 Q9.6 4.2 8.8 2.2 Z" fill="#a6a6a6"/></svg>
<div class="t" style="left:680.00px;top:23.65px;font-size:11px;letter-spacing:-0.063px;color:#222;">index.html</div>
<svg class="a" style="left:814px;top:26px" width="8" height="8" viewBox="0 0 8 8"><path d="M1 1 L7 7 M7 1 L1 7" stroke="#9c9c9c" stroke-width="1.2"/></svg>
<svg class="a" style="left:655px;top:50px" width="14" height="12" viewBox="0 0 14 12"><path d="M13 6 H3 M7.5 1.5 L2.5 6 L7.5 10.5" fill="none" stroke="#4e4e4e" stroke-width="2.8" stroke-linejoin="miter"/></svg>
<svg class="a" style="left:680px;top:50px" width="14" height="12" viewBox="0 0 14 12"><path d="M1 6 H11 M6.5 1.5 L11.5 6 L6.5 10.5" fill="none" stroke="#c4c4c4" stroke-width="2.4"/></svg>
<svg class="a" style="left:706px;top:50px" width="14" height="13" viewBox="0 0 14 13"><path d="M6.6 1.2 A4.9 4.9 0 1 0 11.4 6.2" fill="none" stroke="#4a4a4a" stroke-width="2.4"/><path d="M12.7 0 V5.8 H6.9 Z" fill="#4a4a4a"/></svg>
<div class="a" style="left:728px;top:44px;width:422px;height:24px;background:#fff;border:1px solid #c4c4c4;border-radius:3px;box-shadow:inset 0 1px 1px rgba(0,0,0,.08)"></div>
<svg class="a" style="left:733px;top:49px" width="14" height="14" viewBox="0 0 14 14"><circle cx="7" cy="7" r="6.1" fill="#fff" stroke="#4a4a4a" stroke-width="1.3"/><path d="M2.2 4.5 Q4 1.6 7 1.6 L6.2 3.2 Q5.2 4.4 6.6 5.4 Q7.8 6.2 6.8 7.4 Q5.2 7.8 4.2 6.6 Q2.8 6 2.2 4.5 Z M6.8 8.4 Q8.8 7.8 10.2 8.8 Q10.6 10.6 9 12.2 Q7.8 12.6 7.6 11 Q7.6 9.8 6.8 8.4 Z M8.8 2.2 Q11 2.8 12.2 5 Q11.6 6.2 10.4 5.6 Q9.6 4.2 8.8 2.2 Z" fill="#a6a6a6"/></svg>
<div class="t" style="left:752.00px;top:49.44px;font-size:13.6px;letter-spacing:0.035px;color:#222;">file:///C:/Users/Vicente/Desktop/transiciones/index.html</div>
<svg class="a" style="left:1131px;top:49px" width="15" height="14" viewBox="0 0 15 14"><path d="M7.5 1 L9.4 5.2 L14 5.6 L10.5 8.7 L11.6 13.2 L7.5 10.8 L3.4 13.2 L4.5 8.7 L1 5.6 L5.6 5.2 Z" fill="#fff" stroke="#5a6478" stroke-width="1.5" stroke-linejoin="round"/></svg>
<svg class="a" style="left:1158px;top:47px" width="16" height="16" viewBox="0 0 16 16"><circle cx="7.5" cy="7.8" r="6.6" fill="#f2f2f2" stroke="#9a9a9a" stroke-width="1"/><path d="M4 13 L3.5 15.5 L8 13.8" fill="#f2f2f2" stroke="#8a8a8a" stroke-width="1"/><circle cx="7.5" cy="7.8" r="5" fill="none" stroke="#c8c8c8" stroke-width="1"/><circle cx="5.6" cy="8" r="2" fill="#8aba5a"/><circle cx="9.6" cy="8" r="2" fill="#8aba5a"/><circle cx="5.6" cy="8" r="1" fill="#1a2a10"/><circle cx="9.6" cy="8" r="1" fill="#1a2a10"/></svg>
<svg class="a" style="left:1185px;top:48px" width="17" height="16" viewBox="0 0 17 16"><path d="M7.5 7 L14.5 14" stroke="#474747" stroke-width="3.6" stroke-linecap="round"/><circle cx="6" cy="5.8" r="4.6" fill="#474747"/><path d="M1.2 1.5 L5.4 5.4" stroke="#efefef" stroke-width="2.8" stroke-linecap="round"/></svg>
<div class="a" style="left:645px;top:73px;width:566px;height:641px;background:#fff;border:1px solid #8a9cb0;border-top:none"></div>
<div class="a" style="left:1213px;top:18px;width:1px;height:700px;background:rgba(255,255,255,.6)"></div>
<div class="a" style="left:1214px;top:6px;width:1px;height:712px;background:#6a86a4"></div>
<div class="t" style="left:654.70px;top:89.41px;font-size:14.2px;letter-spacing:-0.393px;color:#c21f22;font-family:'Liberation Serif',serif;word-spacing:1px;">Yo soy un texto</div>
<svg class="a" style="left:853px;top:135px" width="13" height="18" viewBox="0 0 13 18"><path d="M0.5 0.5 V14 L3.8 11.2 L6.2 15.8 Q7.2 16.5 8.3 15.9 Q8.8 15.2 8.5 14.4 L7.2 10.8 H11 Z" fill="#fff" stroke="#3a3a3a" stroke-width="1.05" stroke-linejoin="round"/></svg>
</body></html>
